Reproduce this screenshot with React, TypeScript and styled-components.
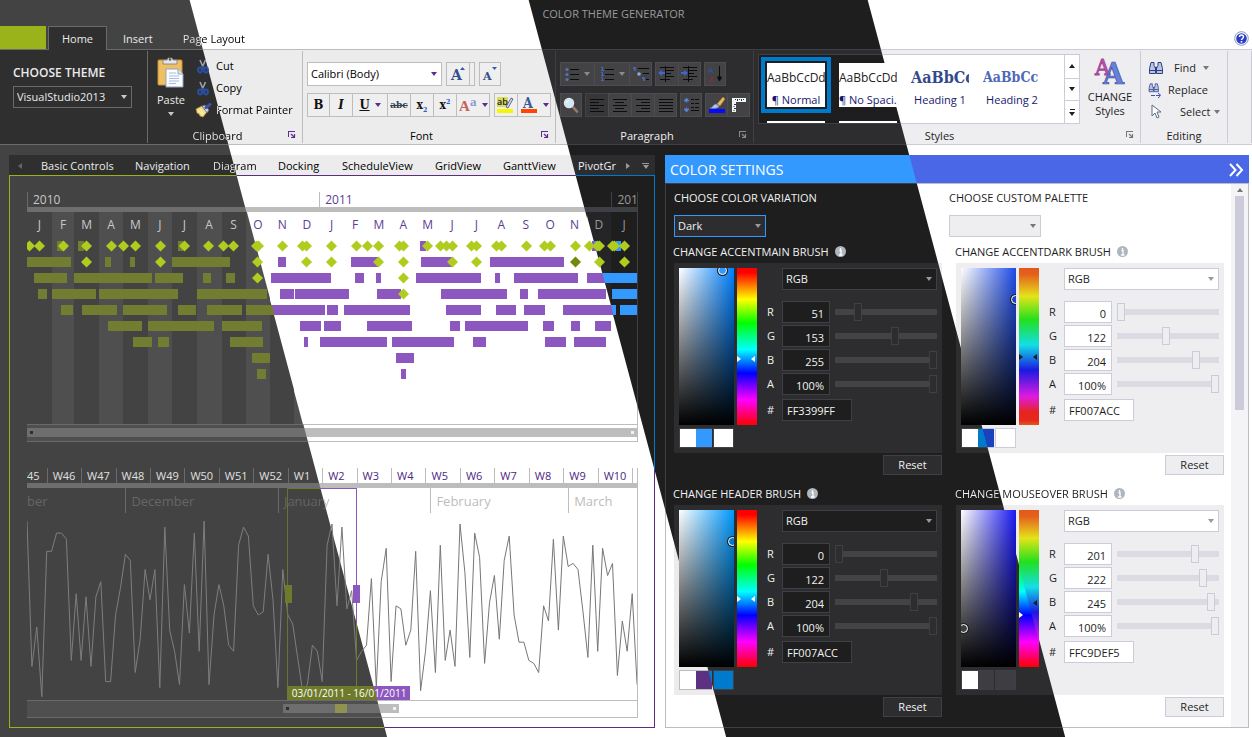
import React from "react";
import styled, { createGlobalStyle, css } from "styled-components";

/* The page is cut by three parallel diagonals into four themes. */
type Tone = [string, string, string, string];
type Band = 0 | 1 | 2 | 3;

const tones: Record<string, Tone> = {
  page: ["#434343", "#ffffff", "#1e1e1e", "#ffffff"],
  panel: ["#2f2f2f", "#ececec", "#2d2d30", "#eeeef1"],
  line: ["#6a6a6a", "#bdbdbd", "#3f3f46", "#cccbda"],
  frame: ["#6a6a6a", "#bdbdbd", "#3f3f46", "#bdbdc4"],
  accent: ["#9ab31a", "#5c2d82", "#007acc", "#007acc"],
  header: ["#9ab31a", "#5c2d82", "#3399ff", "#4a67e8"],
  ink: ["#ebebeb", "#000000", "#f1f1f1", "#1e1e1e"],
  tool: ["#444444", "#efeff0", "#434346", "#f5f5f7"],
  toolLine: ["#555555", "#bdbdbd", "#4d4d51", "#cccbda"],
  field: ["#2f2f2f", "#ffffff", "#1e1e1e", "#ffffff"],
  track: ["#4f4f4f", "#ffffff", "#1e1e1e", "#ffffff"],
  scroll: ["#6e6e6e", "#bdbdbd", "#3f3f46", "#cccbda"],
  stripe: ["#4f4f4f", "#ffffff", "#252528", "#ffffff"],
  faint: ["#666666", "#bdbdbd", "#666666", "#bdbdbd"],
  task: ["#727d31", "#8c57bf", "#3399ff", "#3399ff"],
  rangeLine: ["#6f7b2b", "#8c57bf", "#3399ff", "#3399ff"],
  plot: ["#7d7d7d", "#767676", "#767676", "#767676"],
  groove: ["#555555", "#dddde2", "#434346", "#dcdbe3"],
};

const cuts = (t: Tone) =>
  `linear-gradient(75deg, ${t[0]} 26.67%, ${t[1]} 26.74%, ${t[1]} 50.06%, ${t[2]} 50.13%, ${t[2]} 73.45%, ${t[3]} 73.52%)`;

const paint = (fill: string, line?: string) =>
  line
    ? css`
        border: 1px solid transparent;
        background: ${cuts(tones[fill])} fixed padding-box, ${cuts(tones[line])} fixed border-box;
      `
    : css`
        background: ${cuts(tones[fill])} fixed;
      `;

const ink = (band?: Band) =>
  band === undefined
    ? css`
        color: transparent;
        background: ${cuts(tones.ink)} fixed;
        -webkit-background-clip: text;
        background-clip: text;
      `
    : css`
        color: ${tones.ink[band]};
      `;

const Global = createGlobalStyle`
  *, *::before, *::after { box-sizing: border-box; }
  html, body { margin: 0; }
  body { min-height: 100vh; ${paint("page")} font: 11px/16px "Open Sans", "Noto Sans", sans-serif; }
  button, input, select { font: inherit; color: inherit; margin: 0; padding: 0; border-radius: 0; outline: none; }
  button { border: 0; background: none; cursor: pointer; }
  svg { display: block; flex: none; }
  h1, h2, h3, p { margin: 0; font: inherit; }
`;

const Text = styled.span<{ $band?: Band }>`
  ${(p) => ink(p.$band)}
  white-space: nowrap;
`;

const Arrow = styled.i<{ $color?: string; $up?: boolean }>`
  flex: none;
  width: 0;
  height: 0;
  border: 3px solid transparent;
  ${(p) =>
    p.$up
      ? css`border-top: 0; border-bottom: 4px solid ${p.$color || "#777"};`
      : css`border-bottom: 0; border-top: 4px solid ${p.$color || "#777"};`}
`;

/* ---------- title and ribbon tabs ---------- */

const TitleRow = styled.header`
  height: 26px;
  padding: 6px 25px 0 0;
  text-align: center;
  color: #9a9a9a;
`;

const TabRow = styled.nav`
  display: flex;
  height: 24px;
  align-items: stretch;
  position: relative;
  &::before {
    content: "";
    position: absolute;
    inset: 23px 0 0;
    ${paint("line")}
  }
`;

const FileTab = styled.button`
  width: 46px;
  height: 23px;
  background: #9ab31a;
`;

const RibbonTab = styled.button<{ $active?: boolean }>`
  position: relative;
  ${(p) =>
    p.$active
      ? css`
          width: 59px;
          margin: 0 1px 0 2px;
          ${paint("panel", "line")}
          border-bottom: 0;
          color: #ebebeb;
        `
      : css`
          height: 23px;
          margin-top: 1px;
          padding: 0 15px;
        `}
`;

const HelpButton = styled.button`
  margin: 5px 3px 0 auto;
  height: 15px;
`;

/* ---------- ribbon ---------- */

const Ribbon = styled.section`
  display: flex;
  height: 95px;
  padding: 1px 0;
  position: relative;
  ${paint("panel")}
  &::after {
    content: "";
    position: absolute;
    inset: 94px 0 0;
    ${paint("line")}
  }
`;

const Rule = styled.i`
  flex: none;
  width: 1px;
  height: 92px;
  ${paint("line")}
`;

const Group = styled.section<{ $w: number; $grow?: boolean }>`
  flex: ${(p) => (p.$grow ? 1 : 0)} 0 ${(p) => p.$w}px;
  min-width: 0;
  display: flex;
  flex-direction: column;
`;

const GroupBody = styled.div`
  flex: 1;
  display: flex;
  min-height: 0;
`;

const Caption = styled.footer<{ $launch?: boolean }>`
  height: 19px;
  display: flex;
  align-items: center;
  justify-content: center;
  position: relative;
  padding: 2px ${(p) => (p.$launch ? 15 : 0)}px 0 0;
`;

const Launcher = styled.button`
  position: absolute;
  right: 6px;
  top: 6px;
`;

const ThemePick = styled.div`
  padding: 14px 0 0 13px;
  color: #ebebeb;
  label { display: block; margin-bottom: 5px; font-weight: 600; font-size: 12px; }
`;

const SelectBox = styled.span<{ $w?: number; $h?: number; $arrow?: string; $fill?: string; $edge?: string; $band: Band }>`
  position: relative;
  display: block;
  ${(p) => (p.$w ? `width: ${p.$w}px;` : "flex: 1;")}
  height: ${(p) => p.$h || 22}px;
  select {
    appearance: none;
    display: block;
    width: 100%;
    height: 100%;
    padding: 0 14px 0 3px;
    ${(p) => paint(p.$fill || "field", "line")}
    ${(p) => p.$edge && css`border-color: ${p.$edge};`}
    color: ${(p) => tones.ink[p.$band]};
  }
  &::after {
    content: "";
    position: absolute;
    right: 5px;
    top: calc(50% - 2px);
    border: 3px solid transparent;
    border-top: 4px solid ${(p) => p.$arrow || "#999"};
    border-bottom: 0;
    pointer-events: none;
  }
`;

const PasteButton = styled.button`
  width: 46px;
  padding-top: 6px;
  display: flex;
  flex-direction: column;
  align-items: center;
  gap: 5px;
  color: #ebebeb;
  span { line-height: 14px; }
`;

const CommandList = styled.div<{ $top?: number }>`
  padding-top: ${(p) => p.$top || 4}px;
  display: flex;
  flex-direction: column;
`;

const Command = styled.button<{ $gap?: number }>`
  display: flex;
  align-items: center;
  height: 22px;
  gap: ${(p) => p.$gap ?? 4}px;
`;

const IconSlot = styled.span<{ $w?: number }>`
  width: ${(p) => p.$w || 16}px;
  display: flex;
  justify-content: center;
`;

const ToolRows = styled.div`
  padding: 11px 4px 0;
  display: flex;
  flex-direction: column;
  gap: 7px;
`;

const ToolRow = styled.div<{ $gap?: number }>`
  display: flex;
  height: 24px;
  gap: ${(p) => p.$gap ?? 4}px;
`;

const ToolSet = styled.div`
  display: flex;
`;

const Tool = styled.button<{ $w?: number; $pressed?: boolean }>`
  width: ${(p) => p.$w || 24}px;
  height: 24px;
  display: flex;
  align-items: center;
  justify-content: center;
  gap: 5px;
  ${paint("tool", "toolLine")}
  ${(p) => p.$pressed && css`background: #373739; border-color: #434346;`}
  & + & { margin-left: -1px; }
`;

const Glyph = styled.span<{ $size?: number; $color?: string; $style?: "italic"; $deco?: string }>`
  font: ${(p) => p.$style || "normal"} bold ${(p) => p.$size || 13}px/18px "DejaVu Serif Condensed", "DejaVu Serif", serif;
  color: ${(p) => p.$color || "#111"};
  text-decoration: ${(p) => p.$deco || "none"};
  white-space: nowrap;
  sub, sup { font-size: 7px; line-height: 0; color: #2f5fc0; }
`;

const Gallery = styled.div`
  flex: 1;
  height: 70px;
  margin: 3px 0 0 4px;
  display: flex;
  min-width: 0;
  ${paint("field", "line")}
`;

const GalleryItems = styled.div`
  flex: 1;
  min-width: 0;
  display: grid;
  grid-template-columns: repeat(4, 70px);
  grid-auto-rows: 56px;
  gap: 2px;
  padding: 2px;
  overflow: hidden;
`;

const StyleItem = styled.button<{ $selected?: boolean }>`
  padding: 2px;
  border: 4px solid ${(p) => (p.$selected ? "#007acc" : "transparent")};
  display: flex;
`;

const StyleThumb = styled.span`
  flex: 1;
  min-width: 0;
  display: flex;
  flex-direction: column;
  overflow: hidden;
  background: #fff;
  color: #16166e;
  text-align: left;
  white-space: nowrap;
  padding-top: 6px;
  gap: 6px;
`;

const Sample = styled.span<{ $kind: "body" | "head" | "sub" }>`
  height: 17px;
  font: 12px/17px "Open Sans", sans-serif;
  color: #222;
  ${(p) => p.$kind === "head" && css`font: bold 16px/17px "DejaVu Serif Condensed", "DejaVu Serif", serif; color: #34498c;`}
  ${(p) => p.$kind === "sub" && css`font: bold 14px/17px "DejaVu Serif Condensed", "DejaVu Serif", serif; color: #5068b8;`}
`;

const StyleName = styled.span<{ $center?: boolean }>`
  text-align: ${(p) => (p.$center ? "center" : "left")};
  line-height: 16px;
`;

const GallerySteps = styled.div`
  width: 15px;
  display: grid;
  grid-template-rows: repeat(3, 1fr);
  button {
    display: flex;
    flex-direction: column;
    gap: 2px;
    align-items: center;
    justify-content: center;
    border: 0 solid #cccbda;
    border-left-width: 1px;
  }
  button + button { border-top-width: 1px; }
  b { width: 5px; height: 1px; background: #1e1e1e; }
`;

const ChangeStyles = styled.button`
  width: 60px;
  padding-top: 6px;
  display: flex;
  flex-direction: column;
  align-items: center;
  color: #1e1e1e;
  span { line-height: 14px; }
  svg { margin-bottom: 4px; }
`;

/* ---------- workspace ---------- */

const Workspace = styled.main`
  display: grid;
  grid-template-columns: 646fr 584fr;
  gap: 10px;
  padding: 10px 3px 9px 9px;
`;

const Pane = styled.section`
  min-width: 0;
  display: flex;
  flex-direction: column;
`;

const DocTabs = styled.nav`
  height: 20px;
  display: flex;
  align-items: center;
  padding: 2px 6px 0 9px;
  ${paint("panel")}
`;

const DocTab = styled.button<{ $w: number }>`
  flex: ${(p) => p.$w} 0 0;
  min-width: 0;
  text-align: left;
  white-space: nowrap;
  overflow: hidden;
`;

const StepArrow = styled.i<{ $left?: boolean }>`
  border: 3px solid transparent;
  ${(p) => (p.$left ? "border-right: 4px solid #666; border-left: 0;" : "border-left: 4px solid #999; border-right: 0;")}
`;

const OverflowMark = styled.button`
  display: flex;
  flex-direction: column;
  gap: 1px;
  align-items: center;
  margin-left: 12px;
  b { width: 7px; height: 1px; background: #999; }
`;

const Canvas = styled.div`
  flex: 1;
  display: flex;
  flex-direction: column;
  gap: 26px;
  padding: 16px 16px 9px 17px;
  ${paint("page", "accent")}
`;

const Chart = styled.figure`
  margin: 0;
  height: 250px;
  display: flex;
  flex-direction: column;
  position: relative;
  ${paint("page", "frame")}
  border-width: 0 1px 1px 0;
`;

const Scale = styled.div<{ $h: number }>`
  display: flex;
  height: ${(p) => p.$h}px;
`;

const Period = styled.span<{ $days: number; $color?: string; $indent?: number; $size?: number; $first?: boolean; $cross?: boolean; $end?: boolean }>`
  flex: ${(p) => p.$days} 0 0;
  min-width: 0;
  overflow: hidden;
  white-space: nowrap;
  display: flex;
  align-items: center;
  position: relative;
  text-indent: ${(p) => p.$indent ?? 6}px;
  color: ${(p) => p.$color || "inherit"};
  font-size: ${(p) => p.$size || 11}px;
  ${(p) =>
    p.$end &&
    css`
      justify-content: flex-end;
      &::after { content: ""; flex: none; width: 7px; }
    `}
  &::before {
    content: "";
    position: absolute;
    inset: 0 auto 0 0;
    width: ${(p) => (p.$first ? 0 : 1)}px;
    ${paint("frame")}
  }
  em {
    font-style: normal;
    ${(p) =>
      p.$cross &&
      css`
        color: transparent;
        background: ${cuts(tones.faint)} fixed;
        -webkit-background-clip: text;
        background-clip: text;
      `}
  }
`;

const ScaleBar = styled.i`
  flex: none;
  height: 5px;
  ${paint("scroll")}
`;

const Months = styled.div`
  display: flex;
  height: 212px;
  position: relative;
  font-size: 12px;
`;

const Month = styled.span<{ $days: number; $odd: boolean; $color: string }>`
  flex: ${(p) => p.$days} 0 0;
  min-width: 0;
  padding-top: 5px;
  text-align: center;
  color: ${(p) => p.$color};
  ${(p) => p.$odd && paint("stripe")}
`;

const Drawing = styled.svg`
  position: absolute;
  inset: 0;
  width: 100%;
  height: 100%;
`;

const ScrollTrack = styled.div`
  flex: 1;
  ${paint("track")}
  padding: 4px 0 0;
  position: relative;
  &::before {
    content: "";
    position: absolute;
    inset: 0 0 auto;
    height: 1px;
    ${paint("frame")}
  }
`;

const ScrollThumb = styled.div<{ $from?: number; $size?: number }>`
  height: 9px;
  margin-left: ${(p) => p.$from || 0}%;
  width: ${(p) => p.$size || 100}%;
  display: flex;
  justify-content: space-between;
  align-items: center;
  padding: 0 3px;
  ${paint("scroll")}
  b { width: 3px; height: 3px; background: #2f2f2f; }
  b:last-child { background: #f2f2f2; }
  i { width: 12px; height: 9px; background: #8f9250; }
`;

const Plot = styled.div`
  height: 212px;
  position: relative;
`;

const Selection = styled.div`
  position: absolute;
  inset: 20px auto 17px 42.6%;
  width: 11.5%;
  &::before {
    content: "";
    position: absolute;
    inset: 0;
    background: ${cuts(tones.rangeLine)} fixed;
    clip-path: polygon(0 0, 100% 0, 100% 100%, calc(100% - 1px) 100%, calc(100% - 1px) 1px, 1px 1px, 1px 100%, 0 100%);
  }
`;

const Grip = styled.i<{ $right?: boolean }>`
  position: absolute;
  top: 97px;
  ${(p) => (p.$right ? "right: -3px;" : "left: -2px;")}
  width: 7px;
  height: 18px;
  ${paint("rangeLine")}
`;

const RangeLabel = styled.span`
  position: absolute;
  left: 0;
  bottom: 0;
  padding: 0 4px 0 5px;
  font-size: 10px;
  line-height: 14px;
  color: #fff;
  white-space: nowrap;
  ${paint("rangeLine")}
`;

/* ---------- color settings ---------- */

const PaneHeader = styled.header`
  height: 28px;
  display: flex;
  align-items: center;
  justify-content: space-between;
  padding: 2px 5px 0;
  color: #fff;
  h2 { font-size: 14px; }
  ${paint("header")}
`;

const SettingsBody = styled.div`
  flex: 1;
  display: flex;
  ${paint("page", "frame")}
`;

const Settings = styled.div`
  flex: 1;
  min-width: 0;
  padding: 6px 7px 8px 8px;
`;

const PickRow = styled.div`
  display: grid;
  grid-template-columns: repeat(2, 1fr);
`;

const Pick = styled.label<{ $band: Band }>`
  display: flex;
  flex-direction: column;
  gap: 9px;
  color: ${(p) => tones.ink[p.$band]};
  > span:last-child { flex: none; }
`;

const Brushes = styled.div`
  display: grid;
  grid-template-columns: repeat(2, 1fr);
  gap: 10px 14px;
  padding-top: 6px;
`;

const Brush = styled.section`
  display: flex;
  flex-direction: column;
`;

const BrushTitle = styled.h3`
  display: flex;
  align-items: center;
  gap: 6px;
  height: 20px;
  padding-bottom: 3px;
  margin-left: -1px;
`;

const Editor = styled.div<{ $band: Band }>`
  height: 190px;
  display: flex;
  gap: 3px;
  padding: 5px;
  color: ${(p) => tones.ink[p.$band]};
  ${paint("panel")}
`;

const PaletteColumn = styled.div`
  display: flex;
  flex-direction: column;
  gap: 3px;
  width: 55px;
`;

const Shade = styled.div<{ $hue: string }>`
  height: 157px;
  position: relative;
  overflow: hidden;
  background: linear-gradient(to top, #000, transparent), linear-gradient(to right, #fff, ${(p) => p.$hue});
`;

const Ring = styled.i<{ $x: number; $y: number; $fill: string }>`
  position: absolute;
  left: ${(p) => p.$x}%;
  top: ${(p) => p.$y}%;
  width: 9px;
  height: 9px;
  margin: -4px;
  border: 1px solid #fff;
  border-radius: 50%;
  box-shadow: 0 0 0 1px #1e1e1e;
  background: ${(p) => p.$fill};
`;

const vivid = "linear-gradient(#f00 3%, #ff0 20%, #0f0 35%, #0ff 52%, #00f 67%, #f0f 84%, #f00)";
const muted = "linear-gradient(#e4581a, #e4601c 4%, #e4e418 18%, #22e01c 33%, #12dfe6 49%, #1a1ae0 65%, #e01ae0 82%, #e6241e 92%, #e6281c 97%, #e4581a)";

const Hue = styled.div<{ $kind: "vivid" | "muted" | "split" }>`
  width: 20px;
  height: 157px;
  position: relative;
  background: ${(p) => (p.$kind === "muted" ? muted : vivid)};
  ${(p) =>
    p.$kind === "split" &&
    css`
      &::before {
        content: "";
        position: absolute;
        inset: 0;
        background: ${muted};
        clip-path: polygon(0 0, 100% 0, 100% 84%, 0 36%);
      }
    `}
`;

const HueMark = styled.i<{ $y: number; $right?: boolean; $color: string }>`
  position: absolute;
  top: ${(p) => p.$y}%;
  margin-top: -3px;
  border: 3px solid transparent;
  ${(p) =>
    p.$right
      ? css`right: 2px; border-right: 4px solid ${p.$color}; border-left: 0;`
      : css`left: 0; border-left: 4px solid ${p.$color}; border-right: 0;`}
`;

const Swatches = styled.div`
  display: flex;
  gap: 1px;
`;

const Swatch = styled.span<{ $wide?: boolean; $fill: string }>`
  flex: ${(p) => (p.$wide ? 34 : 20)} 0 0;
  height: 20px;
  display: flex;
  ${paint("panel", "line")}
  &::before, &::after { content: ""; flex: 1; background: ${(p) => p.$fill}; }
  ${(p) => p.$wide && css`&::before { background: #fff; }`}
`;

const Controls = styled.div`
  flex: 1;
  min-width: 0;
  padding-left: 7px;
  display: grid;
  grid-template-columns: 15px 1fr;
  grid-template-rows: 32px repeat(4, 24px) 1fr;
  > span:first-child { grid-column: 2; }
`;

const ChannelRow = styled.label`
  grid-column: 1 / -1;
  display: grid;
  grid-template-columns: 15px 48px 1fr;
  align-items: center;
`;

const Box = styled.input<{ $wide?: boolean }>`
  width: ${(p) => (p.$wide ? 70 : 48)}px;
  height: 22px;
  ${paint("field", "line")}
  ${(p) => (p.$wide ? "padding: 0 4px;" : "padding: 2px 5px 0; text-align: right;")}
`;

const HexRow = styled.label`
  grid-column: 1 / -1;
  display: grid;
  grid-template-columns: 15px 1fr;
  align-items: center;
  align-self: start;
  margin-top: 3px;
`;

const Slider = styled.input`
  appearance: none;
  min-width: 0;
  width: calc(100% - 5px);
  height: 18px;
  margin-left: 5px;
  background: none;
  &::-webkit-slider-runnable-track { height: 6px; ${paint("groove")} }
  &::-webkit-slider-thumb {
    appearance: none;
    width: 8px;
    height: 18px;
    margin-top: -6px;
    ${paint("panel", "line")}
  }
`;

const ResetButton = styled.button<{ $band: Band }>`
  align-self: flex-end;
  width: 59px;
  height: 20px;
  margin-top: 2px;
  ${paint("panel", "line")}
  color: ${(p) => tones.ink[p.$band]};
`;

const PageScroll = styled.div`
  width: 17px;
  background: #f4f4f6;
  display: flex;
  flex-direction: column;
  align-items: center;
  gap: 4px;
  padding-top: 4px;
  b { width: 9px; height: 214px; background: #cccbda; }
`;

/* ---------- icons ---------- */

const PasteIcon = () => (
  <svg width="28" height="31" viewBox="0 0 28 31">
    <rect x="1" y="3" width="24" height="25" rx="1" fill="#efbf63" stroke="#c98f37" />
    <path d="M6 3h4l1-2h4l1 2h4v4H6z" fill="#e3e5e8" stroke="#777b82" strokeWidth=".8" />
    <circle cx="13" cy="2.500" r="1.200" fill="#555" />
    <path d="M9 12h12l5 5v13H9z" fill="#fafcff" stroke="#8fa4c4" />
    <path d="M21 12v5h5" fill="#dfe7f3" stroke="#8fa4c4" />
    <path d="M12 16h7M12 19h10M12 21.500h10M12 24h10M12 26.500h7" stroke="#a9bcd8" />
  </svg>
);

const CutIcon = () => (
  <svg width="12" height="15" viewBox="0 0 12 15">
    <path d="M3 1l3.500 8M8.500 1L5 9" stroke="#98a3b0" strokeWidth="1.600" />
    <ellipse cx="3" cy="11" rx="2" ry="2.500" fill="#2a3550" stroke="#2d4fa0" strokeWidth="1.900" />
    <ellipse cx="9" cy="11" rx="2" ry="2.500" fill="#2a3550" stroke="#2d4fa0" strokeWidth="1.900" />
    <path d="M3.500 9.500L6 6.500l2.500 3z" fill="#2d4fa0" />
  </svg>
);

const BrushIcon = () => (
  <svg width="17" height="15" viewBox="0 0 17 15">
    <path d="M1 6l6-3 5 6-4 5-3-1-1-2-2-1z" fill="#f2dc85" stroke="#b58f34" strokeWidth=".7" />
    <path d="M3 7l5 5M5 6l4 5" stroke="#fff6cf" />
    <path d="M7 3l3-1 4 5-2 3z" fill="#c9ced8" stroke="#5a6272" strokeWidth=".7" />
    <path d="M11 4.500L15 1.500" stroke="#3a55a8" strokeWidth="3" strokeLinecap="round" />
  </svg>
);

const LaunchIcon = ({ color }: { color: string }) => (
  <svg width="8" height="8" viewBox="0 0 8 8">
    <path d="M0 .5h7M.5 0v6" stroke={color} fill="none" />
    <path d="M3 3l3 3M6.500 3v4M3 6.500h4" stroke={color} strokeWidth="1.200" fill="none" />
  </svg>
);

const FontSize = ({ up }: { up?: boolean }) => (
  <svg width="16" height="16" viewBox="0 0 16 16">
    <text x="1" y="14" fontFamily="DejaVu Serif" fontWeight="bold" fontSize={up ? 14 : 11} fill="#33518c">A</text>
    <path d={up ? "M10 4l2.500-3L15 4z" : "M10 1h5l-2.500 3z"} fill="#2e5ab4" />
  </svg>
);

const CaseIcon = () => (
  <svg width="18" height="16" viewBox="0 0 18 16">
    <text x="0" y="14" fontFamily="Liberation Serif" fontWeight="bold" fontSize="15" fill="#c8605c">A</text>
    <text x="11" y="9" fontFamily="Liberation Serif" fontWeight="bold" fontSize="13" fill="#8d9ad6">a</text>
  </svg>
);

const Highlight = () => (
  <svg width="18" height="18" viewBox="0 0 18 18">
    <rect x="0" y="1" width="11" height="10" fill="#d8dc5c" />
    <text x="0" y="9" fontFamily="Open Sans" fontSize="9" fontWeight="600" fill="#222">ab</text>
    <path d="M9 11l5-9 2 1-5 9z" fill="#d7dbe6" stroke="#3c4c80" strokeWidth=".8" />
    <rect x="0" y="13" width="16" height="4" fill="#f6f600" />
  </svg>
);

const FontColor = () => (
  <svg width="18" height="18" viewBox="0 0 18 18">
    <text x="3" y="12" fontFamily="DejaVu Serif Condensed" fontWeight="bold" fontSize="14" fill="#3a5a9c">A</text>
    <rect x="1" y="13" width="16" height="4" fill="#ff4500" />
  </svg>
);

const ListIcon = ({ numbered }: { numbered?: boolean }) => (
  <svg width="14" height="15" viewBox="0 0 14 15">
    {[2, 7, 12].map((y) => (
      <g key={y}>
        {numbered ? (
          <path d={`M1 ${y - 1.5}h1.500v3M1 ${y + 1.5}h3`} stroke="#4468c8" fill="none" />
        ) : (
          <circle cx="2" cy={y + 0.5} r="1.600" fill="#5872b4" />
        )}
        <path d={`M5 ${y + 0.5}h9`} stroke="#0c0c0c" />
      </g>
    ))}
  </svg>
);

const TreeIcon = () => (
  <svg width="18" height="16" viewBox="0 0 18 16">
    <path d="M1 2h2v3M10 12h2v3" stroke="#4c70d0" fill="none" strokeWidth="1.300" />
    <path d="M6 2.500h11M11 7.500h6M14 13.500h3" stroke="#0c0c0c" />
    <circle cx="7" cy="8" r="1.800" fill="#8ea6e6" />
  </svg>
);

const IndentIcon = ({ out }: { out?: boolean }) => (
  <svg width="18" height="16" viewBox="0 0 18 16">
    <path d="M2 1.500h14M8 4.500h8M8 7.500h5M8 10.500h8M2 13.500h10M7.500 0v16" stroke="#0c0c0c" />
    <path d={out ? "M0 7l4-3v2h3v2H4v2z" : "M7 7L3 4v2H0v2h3v2z"} fill="#3f66cc" />
  </svg>
);

const SortIcon = () => (
  <svg width="16" height="20" viewBox="0 0 16 20">
    <text x="1" y="9" fontFamily="Liberation Sans" fontWeight="bold" fontSize="8" fill="#2e4f9e">A</text>
    <text x="1" y="18" fontFamily="Liberation Sans" fontWeight="bold" fontSize="8" fill="#8c2836">Z</text>
    <path d="M12.500 2v14M10.500 13l2 4 2-4z" stroke="#0c0c0c" fill="#0c0c0c" />
  </svg>
);

const FindIcon = () => (
  <svg width="16" height="16" viewBox="0 0 16 16">
    <path d="M9 9l5 5.500" stroke="#9c7a66" strokeWidth="2.600" strokeLinecap="round" />
    <circle cx="6" cy="6" r="4.500" fill="#cfe8fa" stroke="#dfe5ea" strokeWidth="1.500" />
    <path d="M3.500 6a2.500 2.500 0 0 1 2.500-2.500" stroke="#fff" fill="none" />
  </svg>
);

const AlignIcon = ({ kind }: { kind: "left" | "center" | "right" | "full" }) => (
  <svg width="14" height="13" viewBox="0 0 14 13">
    {[0, 1, 2, 3, 4].map((i) => {
      const w = kind === "full" || i % 2 === 0 ? 14 : 9;
      const x = kind === "right" ? 14 - w : kind === "center" ? Math.floor((14 - w) / 2) : 0;
      return <rect key={i} x={x} y={i * 3} width={w} height="1" fill="#0c0c0c" />;
    })}
  </svg>
);

const SpacingIcon = () => (
  <svg width="17" height="16" viewBox="0 0 17 16">
    <path d="M3.500 1l2.500 3H1zM3.500 15l2.500-3H1zM3.500 4v2M3.500 10v2" fill="#5b84dc" stroke="#5b84dc" strokeWidth=".7" />
    <path d="M8 2.500h3M12 2.500h4M8 6.500h3M12 6.500h4M8 10.500h3M12 10.500h4M8 13.500h8" stroke="#0c0c0c" />
  </svg>
);

const FillIcon = () => (
  <svg width="18" height="18" viewBox="0 0 18 18">
    <path d="M9 8l6-7 2 2-5 7z" fill="#e9b75e" stroke="#a87627" strokeWidth=".6" />
    <path d="M2 12c3 0 3-4 6-4l3 2c0 2-4 3-9 2z" fill="#a9c4ee" stroke="#5c7fbf" strokeWidth=".7" />
    <rect x="1" y="13" width="16" height="4" fill="#0808ff" />
  </svg>
);

const RulerIcon = () => (
  <svg width="16" height="16" viewBox="0 0 16 16">
    <path d="M1 1h14v4H5v10H1z" fill="#eef6f9" />
    <path d="M4.500 3v-1M6.500 4v-2M8.500 3v-1M10.500 4v-2M12.500 3v-1M3 7.500h2M2.500 9.500h1M3 11.500h2M2.500 13.500h1" stroke="#333" />
  </svg>
);

const StylesIcon = () => (
  <svg width="32" height="29" viewBox="0 0 32 29">
    <text x="1" y="18" fontFamily="DejaVu Serif Condensed" fontSize="23" fill="#b45aa8" stroke="#a8489c" strokeWidth="1">A</text>
    <text x="9" y="27" fontFamily="DejaVu Serif Condensed" fontWeight="bold" fontSize="30" fill="#6a80d8" stroke="#3b4f9c" strokeWidth=".7">A</text>
  </svg>
);

const Binoculars = ({ small }: { small?: boolean }) => (
  <svg width="16" height="16" viewBox="0 0 16 16">
    <g transform={small ? "translate(1 0) scale(.72)" : undefined} fill="#b8c4e6" stroke="#2f3f80">
      <path d="M3 2.500h3v3l1.500 2v6h-6v-5z" />
      <path d="M10 2.500h3l1.500 6v5h-6v-6l1.500-2z" />
      <path d="M6.500 7.500h3M1.500 10.500h6M8.500 10.500h6" />
    </g>
    {small && <path d="M4 13.500h9M11 11l3 2.500-3 2.500" stroke="#3652c0" fill="none" strokeDasharray="4 1" />}
  </svg>
);

const PointerIcon = () => (
  <svg width="11" height="16" viewBox="0 0 11 16">
    <path d="M1 1v11l3-3 2 5 2-1-2-5h4z" fill="#fff" stroke="#5c6c8c" />
  </svg>
);

const HelpIcon = () => (
  <svg width="15" height="15" viewBox="0 0 15 15">
    <circle cx="7.500" cy="7.500" r="6.800" fill="#fff" stroke="#8494c8" />
    <circle cx="7.500" cy="7.500" r="5.300" fill="#2a3cc4" />
    <path d="M5.500 6c0-2.600 4-2.600 4 0 0 1.500-2 1.500-2 3" stroke="#fff" strokeWidth="1.500" fill="none" />
    <rect x="6.700" y="10" width="1.600" height="1.600" fill="#fff" />
  </svg>
);

const InfoIcon = () => (
  <svg width="11" height="11" viewBox="0 0 11 11">
    <circle cx="5.500" cy="5.500" r="5.500" fill="#b0b6bd" />
    <path d="M4.500 4.500h1.500V9M4 9h3.500M5.500 2v1.400" stroke="#fff" strokeWidth="1.300" fill="none" />
  </svg>
);

const CollapseIcon = () => (
  <svg width="16" height="14" viewBox="0 0 16 14">
    <path d="M2 1l5.500 6L2 13M8.500 1L14 7l-5.500 6" stroke="#fff" strokeWidth="2" fill="none" />
  </svg>
);

/* ---------- data ---------- */

const tasks: [number, number][][] = [
  [[57, 63], [78, 84], [178, 183], [420, 426], [592, 597], [616, 621]],
  [[27, 71], [105, 111], [130, 135], [172, 230], [278, 286], [351, 378], [421, 452], [490, 564]],
  [[34, 67], [74, 152], [155, 183], [203, 211], [226, 235], [271, 331], [355, 364], [376, 381], [416, 481], [495, 500], [514, 578], [587, 637]],
  [[38, 47], [52, 96], [99, 178], [197, 267], [280, 294], [295, 349], [377, 401], [441, 507], [520, 528], [538, 606], [612, 637]],
  [[61, 73], [82, 117], [123, 167], [178, 196], [207, 242], [246, 325], [327, 338], [344, 410], [446, 481], [496, 516], [524, 545], [563, 616], [620, 637]],
  [[108, 142], [148, 214], [222, 262], [300, 321], [324, 341], [367, 412], [450, 460], [465, 528], [543, 554], [571, 580], [595, 611]],
  [[133, 152], [158, 169], [230, 263], [304, 308], [320, 387], [392, 454], [473, 486], [545, 566], [574, 606]],
  [[252, 270], [396, 414]],
  [[257, 266], [401, 406]],
];

const milestones: number[][] = [
  [29, 39, 63, 86, 111, 123, 135, 160, 184, 208, 223, 233, 256, 258, 282, 302, 306, 331, 356, 367, 378, 399, 403, 427, 440, 446, 452, 471, 476, 496, 501, 526, 544, 550, 575, 589, 597, 599, 612, 614, 624],
  [86, 160, 257, 306, 331, 378, 403, 452, 476, 575, 599, 624],
  [257, 403],
  [403],
];

const readings = [
  0, 48, 35, 58, 10, 10, 4, 4, 6, 46, 24, 46, 25, 48, 25, 20, 53, 53, 31, 22, 11, 13, 50, 39, 16, 26, 16, 55, 2, 36, 43,
  54, 21, 37, 4, 43, 0, 54, 31, 21, 28, 41, 43, 8, 2, 5, 28, 31, 30, 11, 26, 55, 16, 31, 34, 45, 56, 54, 41, 43, 53, 8,
  1, 28, 2, 29, 23, 46, 43, 41, 19, 55, 20, 9, 53, 28, 29, 41, 36, 10, 56, 43, 23, 50, 8, 46, 36, 48, 1, 17, 45, 4, 12,
  47, 27, 18, 39, 13, 5, 31, 40, 40, 46, 47, 50, 28, 33, 6, 36, 5, 15, 14, 16, 30, 45, 8, 43, 9, 18, 14, 51, 33, 43, 24,
  54,
];

const monthDays = [31, 28, 31, 30, 31, 30, 31, 31, 30, 31, 30, 31];
const monthNames = "JFMAMJJASOND";
const months = Array.from({ length: 25 }, (_, i) => ({
  name: monthNames[i % 12],
  days: i === 24 ? 32 : monthDays[i % 12],
  color: i < 9 ? "#c8c8c8" : i < 23 ? "#5c3c96" : "#999999",
}));
const weeks = [46, 47, 48, 49, 50, 51, 52, 1, 2, 3, 4, 5, 6, 7, 8, 9, 10];

const DiagonalFill = ({ id, tone }: { id: string; tone: string }) => {
  const t = tones[tone];
  return (
    <linearGradient id={id} gradientUnits="userSpaceOnUse" x1="0" y1="0" x2="966" y2="-258">
      <stop offset=".1835" stopColor={t[0]} />
      <stop offset=".1845" stopColor={t[1]} />
      <stop offset=".5110" stopColor={t[1]} />
      <stop offset=".5120" stopColor={t[2]} />
    </linearGradient>
  );
};

const GanttDrawing = () => (
  <Drawing viewBox="27 212 610 212" preserveAspectRatio="none" aria-label="Project tasks">
    <defs>
      <DiagonalFill id="task-fill" tone="task" />
    </defs>
    {tasks.map((row, r) =>
      row.map(([a, b]) => (
        <rect key={`${r}-${a}`} x={a} y={241 + r * 16} width={b - a} height="10" fill="url(#task-fill)" />
      ))
    )}
    {milestones.map((row, r) =>
      row.map((x) => (
        <path
          key={`${r}-${x}`}
          d={`M${x - 5} ${246 + r * 16}l5.500-5.500 5.500 5.500-5.500 5.500z`}
          fill={r === 1 && x === 575 ? "#718a0c" : "#b0cc1e"}
        />
      ))
    )}
  </Drawing>
);

const TimelineDrawing = () => (
  <Drawing viewBox="27 488 610 212" preserveAspectRatio="none" aria-label="Daily values">
    <defs>
      <DiagonalFill id="plot-stroke" tone="plot" />
    </defs>
    <polyline
      points={readings.map((v, i) => `${(27 + i * 4.92).toFixed(1)},${(521 + v * 3.03).toFixed(1)}`).join(" ")}
      fill="none"
      stroke="url(#plot-stroke)"
      strokeWidth="1"
    />
  </Drawing>
);

const docTabs: [string, number, Band?][] = [
  ["Basic Controls", 94, 0],
  ["Navigation", 78, 0],
  ["Diagram", 65],
  ["Docking", 64, 1],
  ["ScheduleView", 93, 1],
  ["GridView", 68, 1],
  ["GanttView", 75, 1],
  ["PivotGr", 48, 2],
];

type BrushSpec = {
  title: string;
  titleBand?: Band;
  band: Band;
  values: [number, number, number];
  hex: string;
  hue: string;
  strip: "vivid" | "muted" | "split";
  ring: [number, number, string];
  marks: [number, string, number, string];
  pair: string;
  single: string;
};

const brushes: BrushSpec[] = [
  { title: "CHANGE ACCENTMAIN BRUSH", titleBand: 2, band: 2, values: [51, 153, 255], hex: "FF3399FF", hue: "#0080ff", strip: "vivid", ring: [79, 1, "#3399ff"], marks: [58, "#fff", 58, "#fff"], pair: "#3399ff", single: "#fff" },
  { title: "CHANGE ACCENTDARK BRUSH", titleBand: 3, band: 3, values: [0, 122, 204], hex: "FF007ACC", hue: "#1f4ce8", strip: "muted", ring: [98, 20, "#1f45c4"], marks: [57, "#1e1e1e", 57, "#1e1e1e"], pair: "linear-gradient(75deg, #007acc 44%, #1b42bd 46%)", single: "#fff" },
  { title: "CHANGE HEADER BRUSH", titleBand: 2, band: 2, values: [0, 122, 204], hex: "FF007ACC", hue: "#0099ff", strip: "vivid", ring: [97, 20, "#007acc"], marks: [57, "#fff", 57, "#fff"], pair: "linear-gradient(75deg, #5c3182 82%, #007acc 84%)", single: "#007acc" },
  { title: "CHANGE MOUSEOVER BRUSH", band: 3, values: [201, 222, 245], hex: "FFC9DEF5", hue: "#1a1af5", strip: "split", ring: [4, 75, "#3e3e42"], marks: [67, "#fff", 59, "#1e1e1e"], pair: "#3e3e42", single: "#3e3e42" },
];

const BrushEditor = ({ spec }: { spec: BrushSpec }) => {
  const channels: [string, string, number, number][] = [
    ["R", String(spec.values[0]), spec.values[0], 255],
    ["G", String(spec.values[1]), spec.values[1], 255],
    ["B", String(spec.values[2]), spec.values[2], 255],
    ["A", "100%", 100, 100],
  ];
  return (
    <Brush>
      <BrushTitle>
        <Text $band={spec.titleBand}>{spec.title}</Text>
        <InfoIcon />
      </BrushTitle>
      <Editor $band={spec.band}>
        <PaletteColumn>
          <Shade $hue={spec.hue}>
            <Ring $x={spec.ring[0]} $y={spec.ring[1]} $fill={spec.ring[2]} />
          </Shade>
          <Swatches>
            <Swatch $wide $fill={spec.pair} />
            <Swatch $fill={spec.single} />
          </Swatches>
        </PaletteColumn>
        <Hue $kind={spec.strip}>
          <HueMark $y={spec.marks[0]} $color={spec.marks[1]} />
          <HueMark $right $y={spec.marks[2]} $color={spec.marks[3]} />
        </Hue>
        <Controls>
          <SelectBox $band={spec.band}>
            <select aria-label={`${spec.title} color model`}>
              <option>RGB</option>
            </select>
          </SelectBox>
          {channels.map(([name, shown, value, max]) => (
            <ChannelRow key={name}>
              {name}
              <Box defaultValue={shown} />
              <Slider type="range" max={max} defaultValue={value} aria-label={`${name} channel`} />
            </ChannelRow>
          ))}
          <HexRow>
            #
            <Box $wide defaultValue={spec.hex} />
          </HexRow>
        </Controls>
      </Editor>
      <ResetButton $band={spec.band}>Reset</ResetButton>
    </Brush>
  );
};

const RibbonCaption = ({ children, band, launch }: { children: string; band?: Band; launch?: string }) => (
  <Caption $launch={!!launch}>
    <Text $band={band}>{children}</Text>
    {launch && (
      <Launcher aria-label={`${children} options`}>
        <LaunchIcon color={launch} />
      </Launcher>
    )}
  </Caption>
);

export default function App() {
  return (
    <>
      <Global />
      <TitleRow>
        <h1>COLOR THEME GENERATOR</h1>
      </TitleRow>
      <TabRow>
        <FileTab aria-label="File" />
        <RibbonTab $active>Home</RibbonTab>
        <RibbonTab><Text $band={0}>Insert</Text></RibbonTab>
        <RibbonTab><Text>Page Layout</Text></RibbonTab>
        <HelpButton aria-label="Help"><HelpIcon /></HelpButton>
      </TabRow>

      <Ribbon>
        <Group $w={147}>
          <ThemePick>
            <label htmlFor="theme">CHOOSE THEME</label>
            <SelectBox $w={119} $fill="panel" $band={0} $arrow="#c8c8c8">
              <select id="theme"><option>VisualStudio2013</option></select>
            </SelectBox>
          </ThemePick>
        </Group>
        <Rule />
        <Group $w={154}>
          <GroupBody>
            <PasteButton>
              <PasteIcon />
              <span>Paste</span>
              <Arrow $color="#c8c8c8" />
            </PasteButton>
            <CommandList>
              <Command><IconSlot $w={18}><CutIcon /></IconSlot><Text $band={1}>Cut</Text></Command>
              <Command><IconSlot $w={18}><CutIcon /></IconSlot><Text $band={1}>Copy</Text></Command>
              <Command><IconSlot $w={18}><BrushIcon /></IconSlot><Text>Format Painter</Text></Command>
            </CommandList>
          </GroupBody>
          <RibbonCaption launch="#5c2d91">Clipboard</RibbonCaption>
        </Group>
        <Rule />
        <Group $w={252}>
          <GroupBody>
            <ToolRows>
              <ToolRow>
                <SelectBox $w={135} $h={24} $band={1} $arrow="#5c2d91">
                  <select aria-label="Font family"><option>Calibri (Body)</option></select>
                </SelectBox>
                <ToolSet>
                  <Tool aria-label="Grow font"><FontSize up /></Tool>
                  <Tool $w={6} aria-label="Font size step" />
                </ToolSet>
                <Tool $w={22} aria-label="Shrink font"><FontSize /></Tool>
              </ToolRow>
              <ToolRow>
                <ToolSet>
                  <Tool $w={23}><Glyph>B</Glyph></Tool>
                  <Tool><Glyph $style="italic">I</Glyph></Tool>
                  <Tool $w={36}><Glyph $deco="underline">U</Glyph><Arrow $color="#5c2d91" /></Tool>
                  <Tool><Glyph $size={10} $color="#344050" $deco="line-through">abc</Glyph></Tool>
                  <Tool><Glyph $size={12}>x<sub>2</sub></Glyph></Tool>
                  <Tool><Glyph $size={12}>x<sup>2</sup></Glyph></Tool>
                  <Tool $w={34} aria-label="Change case"><CaseIcon /><Arrow $color="#5c2d91" /></Tool>
                </ToolSet>
                <ToolSet>
                  <Tool aria-label="Highlight"><Highlight /></Tool>
                  <Tool $w={34} aria-label="Font color"><FontColor /><Arrow $color="#5c2d91" /></Tool>
                </ToolSet>
              </ToolRow>
            </ToolRows>
          </GroupBody>
          <RibbonCaption band={1} launch="#5c2d91">Font</RibbonCaption>
        </Group>
        <Rule />
        <Group $w={197}>
          <GroupBody>
            <ToolRows>
              <ToolRow $gap={3}>
                <ToolSet>
                  <Tool $w={35} aria-label="Bullets"><ListIcon /><Arrow $color="#8a8a8a" /></Tool>
                  <Tool $w={36} aria-label="Numbering"><ListIcon numbered /><Arrow $color="#8a8a8a" /></Tool>
                  <Tool $w={23} aria-label="Multilevel list"><TreeIcon /></Tool>
                </ToolSet>
                <ToolSet>
                  <Tool aria-label="Decrease indent"><IndentIcon out /></Tool>
                  <Tool $w={23} aria-label="Increase indent"><IndentIcon /></Tool>
                </ToolSet>
                <Tool $w={22} aria-label="Sort"><SortIcon /></Tool>
              </ToolRow>
              <ToolRow $gap={3}>
                <Tool $w={22} aria-label="Zoom"><FindIcon /></Tool>
                <ToolSet>
                  <Tool $pressed aria-label="Align left"><AlignIcon kind="left" /></Tool>
                  <Tool aria-label="Align center"><AlignIcon kind="center" /></Tool>
                  <Tool aria-label="Align right"><AlignIcon kind="right" /></Tool>
                  <Tool $w={23} aria-label="Justify"><AlignIcon kind="full" /></Tool>
                </ToolSet>
                <Tool $w={22} aria-label="Line spacing"><SpacingIcon /></Tool>
                <ToolSet>
                  <Tool $w={23} aria-label="Shading"><FillIcon /></Tool>
                  <Tool $w={23} aria-label="Ruler"><RulerIcon /></Tool>
                </ToolSet>
              </ToolRow>
            </ToolRows>
          </GroupBody>
          <RibbonCaption band={2} launch="#8a8a8a">Paragraph</RibbonCaption>
        </Group>
        <Rule />
        <Group $w={386} $grow>
          <GroupBody>
            <Gallery>
              <GalleryItems>
                <StyleItem $selected>
                  <StyleThumb><Sample $kind="body">AaBbCcDd</Sample><StyleName $center>¶ Normal</StyleName></StyleThumb>
                </StyleItem>
                <StyleItem>
                  <StyleThumb><Sample $kind="body">AaBbCcDd</Sample><StyleName>¶ No Spaci...</StyleName></StyleThumb>
                </StyleItem>
                <StyleItem>
                  <StyleThumb><Sample $kind="head">AaBbCc</Sample><StyleName $center>Heading 1</StyleName></StyleThumb>
                </StyleItem>
                <StyleItem>
                  <StyleThumb><Sample $kind="sub">AaBbCc</Sample><StyleName $center>Heading 2</StyleName></StyleThumb>
                </StyleItem>
                <StyleItem aria-label="Title"><StyleThumb /></StyleItem>
                <StyleItem aria-label="Subtitle"><StyleThumb /></StyleItem>
              </GalleryItems>
              <GallerySteps>
                <button aria-label="Previous styles"><Arrow $up $color="#1e1e1e" /></button>
                <button aria-label="Next styles"><Arrow $color="#1e1e1e" /></button>
                <button aria-label="More styles"><b /><Arrow $color="#1e1e1e" /></button>
              </GallerySteps>
            </Gallery>
            <ChangeStyles>
              <StylesIcon />
              <span>CHANGE</span>
              <span>Styles</span>
            </ChangeStyles>
          </GroupBody>
          <RibbonCaption band={3} launch="#777">Styles</RibbonCaption>
        </Group>
        <Rule />
        <Group $w={86}>
          <GroupBody>
            <CommandList $top={6}>
              <Command $gap={3}>
                <IconSlot $w={30}><Binoculars /></IconSlot>
                <Text $band={3}>Find</Text>
                <IconSlot $w={1} />
                <Arrow />
              </Command>
              <Command $gap={0}><IconSlot $w={27}><Binoculars small /></IconSlot><Text $band={3}>Replace</Text></Command>
              <Command>
                <IconSlot $w={30}><PointerIcon /></IconSlot>
                <IconSlot $w={1} />
                <Text $band={3}>Select</Text>
                <Arrow />
              </Command>
            </CommandList>
          </GroupBody>
          <RibbonCaption band={3}>Editing</RibbonCaption>
        </Group>
        <Rule />
        <Group $w={23} />
        <Rule />
      </Ribbon>

      <Workspace>
        <Pane>
          <DocTabs>
            <StepArrow $left />
            <IconSlot $w={19} />
            {docTabs.map(([name, w, band]) => (
              <DocTab key={name} $w={w}><Text $band={band}>{name}</Text></DocTab>
            ))}
            <StepArrow />
            <OverflowMark aria-label="More tabs"><b /><Arrow $color="#999" /></OverflowMark>
          </DocTabs>
          <Canvas>
            <Chart>
              <Scale $h={15}>
                <Period $days={365} $color="#c8c8c8" $size={12}>2010</Period>
                <Period $days={365} $color="#5c3c96" $size={12}>2011</Period>
                <Period $days={32} $color="#999" $size={12}>2012</Period>
              </Scale>
              <ScaleBar />
              <Months>
                {months.map((m, i) => (
                  <Month key={i} $days={m.days} $odd={i % 2 === 1} $color={m.color}>{m.name}</Month>
                ))}
                <GanttDrawing />
              </Months>
              <ScrollTrack>
                <ScrollThumb><b /><b /></ScrollThumb>
              </ScrollTrack>
            </Chart>
            <Chart>
              <Scale $h={15}>
                <Period $days={4} $first $end $indent={0} $color="#e0e0e0">W45</Period>
                {weeks.map((w) => (
                  <Period key={w} $days={7} $color={w > 1 && w < 11 ? "#4b2583" : "#e0e0e0"}>{`W${w}`}</Period>
                ))}
                <Period $days={1} $indent={0} />
              </Scale>
              <ScaleBar />
              <Plot>
                <Scale $h={25}>
                  <Period $days={20} $first $indent={0} $color="#666" $size={13}>ber</Period>
                  <Period $days={31} $color="#666" $size={13}>December</Period>
                  <Period $days={31} $cross $size={13}><em>January</em></Period>
                  <Period $days={28} $color="#bdbdbd" $size={13}>February</Period>
                  <Period $days={14} $color="#bdbdbd" $size={13}>March</Period>
                </Scale>
                <TimelineDrawing />
              </Plot>
              <Selection>
                <Grip />
                <Grip $right />
                <RangeLabel>03/01/2011 - 16/01/2011</RangeLabel>
              </Selection>
              <ScrollTrack>
                <ScrollThumb $from={42} $size={19}><b /><i /><b /></ScrollThumb>
              </ScrollTrack>
            </Chart>
          </Canvas>
        </Pane>

        <Pane>
          <PaneHeader>
            <h2>COLOR SETTINGS</h2>
            <button aria-label="Collapse"><CollapseIcon /></button>
          </PaneHeader>
          <SettingsBody>
            <Settings>
              <PickRow>
                <Pick $band={2}>
                  CHOOSE COLOR VARIATION
                  <SelectBox $w={92} $fill="panel" $edge="#3399ff" $band={2}>
                    <select><option>Dark</option></select>
                  </SelectBox>
                </Pick>
                <Pick $band={3}>
                  CHOOSE CUSTOM PALETTE
                  <SelectBox $w={92} $fill="panel" $band={3} $arrow="#777">
                    <select><option></option></select>
                  </SelectBox>
                </Pick>
              </PickRow>
              <Brushes>
                {brushes.map((b) => (
                  <BrushEditor key={b.title} spec={b} />
                ))}
              </Brushes>
            </Settings>
            <PageScroll>
              <Arrow $up />
              <b />
            </PageScroll>
          </SettingsBody>
        </Pane>
      </Workspace>
    </>
  );
}
